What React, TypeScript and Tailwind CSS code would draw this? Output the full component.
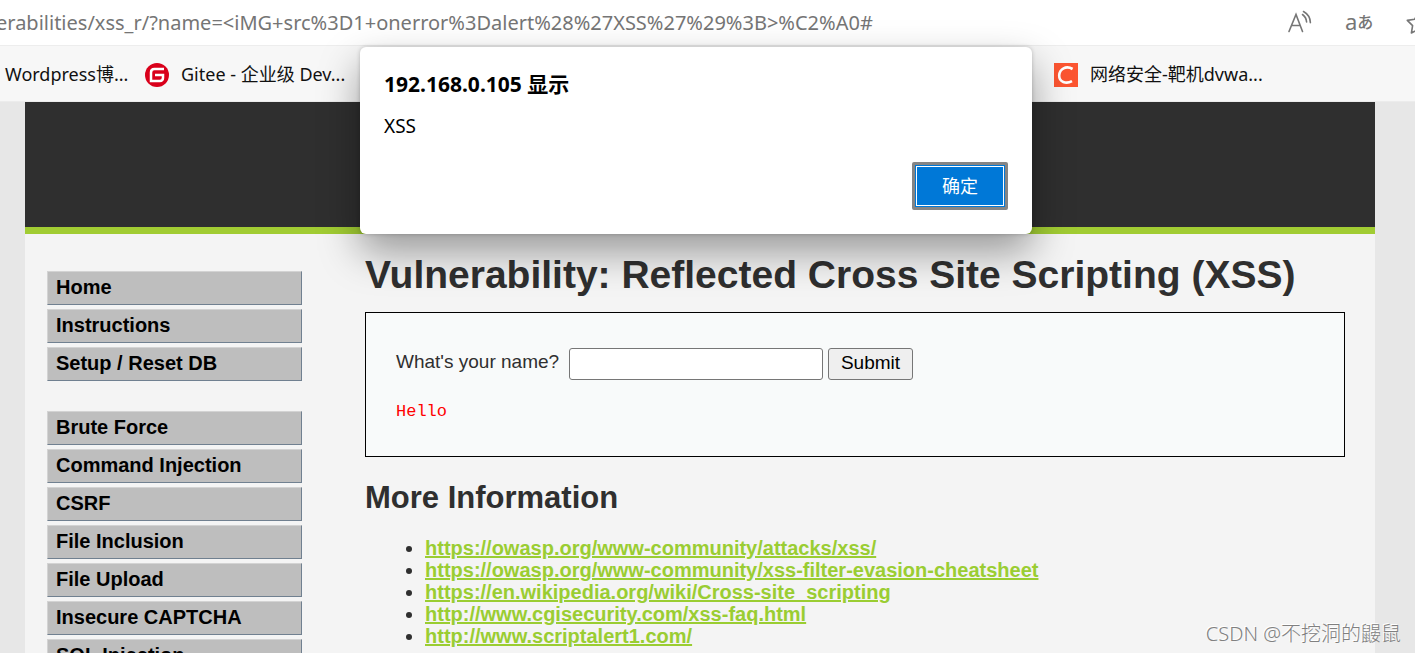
import React from "react";

const setupLinks = ["Home", "Instructions", "Setup / Reset DB"];
const vulnerabilityLinks = [
  "Brute Force",
  "Command Injection",
  "CSRF",
  "File Inclusion",
  "File Upload",
  "Insecure CAPTCHA",
  "SQL Injection",
];
const moreInfo = [
  "https://owasp.org/www-community/attacks/xss/",
  "https://owasp.org/www-community/xss-filter-evasion-cheatsheet",
  "https://en.wikipedia.org/wiki/Cross-site_scripting",
  "http://www.cgisecurity.com/xss-faq.html",
  "http://www.scriptalert1.com/",
];
const address =
  "erabilities/xss_r/?name=<iMG+src%3D1+onerror%3Dalert%28%27XSS%27%29%3B>%C2%A0#";

function ReadAloudIcon() {
  return (
    <svg width="26" height="26" viewBox="0 0 26 26" fill="none" stroke="#767676" strokeWidth="1.6" strokeLinecap="round">
      <path d="M2 21.5 L9 4.5 L15.5 21.5 M4.8 15.5 H13.2" />
      <path d="M15.5 4.5 C18 6.4 19.4 8.8 19.6 12" />
      <path d="M16.5 1.5 C20.6 3.8 23.2 7.6 23.4 12.6" />
    </svg>
  );
}

function StarIcon() {
  return (
    <svg width="26" height="26" viewBox="0 0 26 26" fill="none" stroke="#767676" strokeWidth="1.6" strokeLinejoin="round">
      <path d="M13 3 L9.7 9.2 L2.3 10.4 L7.6 15.6 L6.4 23 L13 19.6 L19.6 23 L18.4 15.6 L23.7 10.4 L16.3 9.2 Z" />
    </svg>
  );
}

function GiteeIcon() {
  return (
    <svg width="24" height="24" viewBox="0 0 24 24" className="shrink-0">
      <circle cx="12" cy="12" r="12" fill="#d9001b" />
      <path d="M19 6 H9.4 Q6 6 6 9.4 V18 H14.8 Q18 18 18 14.8 V12 H10" fill="none" stroke="#fff" strokeWidth="2.5" />
    </svg>
  );
}

function CsdnIcon() {
  return (
    <svg width="24" height="24" viewBox="0 0 24 24" className="shrink-0">
      <rect width="24" height="24" fill="#fc5531" />
      <path d="M18.6 6 C12 2.2 5.6 6 5.2 12.4 C5 19 12 21.4 18 18.2" fill="none" stroke="#fff" strokeWidth="2.6" />
    </svg>
  );
}

function Menu({ items }: { items: string[] }) {
  return (
    <ul className="flex flex-col gap-1">
      {items.map((item) => (
        <li key={item}>
          <a
            href="#"
            className="block h-[34px] border border-t-[#d3d3d3] border-l-[#d3d3d3] border-r-[#708090] border-b-[#708090] bg-[#bebebe] pl-2 text-[20px] leading-[31px] font-bold whitespace-nowrap text-black"
          >
            {item}
          </a>
        </li>
      ))}
    </ul>
  );
}

export default function App() {
  return (
    <div className="relative flex h-screen flex-col overflow-hidden bg-[#e7e7e7] font-['Noto_Sans','Noto_Sans_CJK_SC',sans-serif]">
      <div className="flex h-[45px] shrink-0 items-center bg-white">
        <input
          aria-label="Address"
          readOnly
          value={address}
          className="-ml-1 min-w-0 flex-1 bg-transparent text-[20px] leading-[28px] text-[#757575] outline-none"
        />
        <div className="-mr-4 flex shrink-0 items-center gap-8">
          <button aria-label="Read aloud"><ReadAloudIcon /></button>
          <button aria-label="Translate" className="flex w-[28px] items-center pb-1 text-[#767676]">
            <span className="text-[22px] leading-[24px]">a</span>
            <span className="font-['Noto_Sans_CJK_JP',sans-serif] text-[16px] leading-[24px] font-medium">あ</span>
          </button>
          <button aria-label="Favorite"><StarIcon /></button>
        </div>
      </div>

      <nav className="flex h-[57px] shrink-0 items-center border-t border-b border-t-[#ededed] border-b-[#ececec] bg-[#f7f7f7] pt-[2px] pl-[5px] text-[18px] whitespace-nowrap text-[#111]">
        <a href="#" className="w-[140px]">Wordpress博...</a>
        <a href="#" className="flex w-[909px] items-center gap-3">
          <GiteeIcon />
          Gitee - 企业级 Dev...
        </a>
        <a href="#" className="flex items-center gap-3">
          <CsdnIcon />
          网络安全-靶机dvwa...
        </a>
      </nav>

      <div className="flex-1 overflow-hidden pr-10 pl-[25px] font-['Liberation_Sans',sans-serif]">
        <header className="h-[132px] border-b-[7px] border-[#a1cc33] bg-[#2f2f2f]" />
        <div className="flex bg-[#f4f4f4] pr-[30px] pl-[22px] text-[#2f2f2f]">
          <nav className="flex w-[255px] shrink-0 flex-col gap-[30px] pt-[37px]">
            <Menu items={setupLinks} />
            <Menu items={vulnerabilityLinks} />
          </nav>
          <main className="ml-[63px] min-w-0 flex-1 pt-[19px]">
            <h1 className="text-[39px] leading-[44px] font-bold whitespace-nowrap">
              Vulnerability: Reflected Cross Site Scripting (XSS)
            </h1>
            <section className="mt-[15px] h-[145px] border border-black bg-[#f8fafa] px-[30px] pt-[35px]">
              <form className="flex h-8 items-center text-[19px]" onSubmit={(e) => e.preventDefault()}>
                <label htmlFor="name" className="w-[173px] pb-1 whitespace-nowrap">What's your name?</label>
                <input
                  id="name"
                  type="text"
                  className="h-8 w-[254px] rounded-[3px] border border-[#767676] bg-white px-1"
                />
                <button
                  type="submit"
                  className="ml-[5px] h-8 w-[85px] rounded-[3px] border border-[#767676] bg-[#efefef] pb-[2px] text-black"
                >
                  Submit
                </button>
              </form>
              <pre className="mt-[21px] font-['Liberation_Mono',monospace] text-[17px] leading-[22px] text-[#ff0000]">Hello</pre>
            </section>
            <h2 className="mt-[23px] text-[31px] leading-[36px] font-bold">More Information</h2>
            <ul className="mt-[21px] list-disc pl-[60px] text-[20px] leading-[22px]">
              {moreInfo.map((url) => (
                <li key={url}>
                  <a href={url} className="font-bold text-[#9acd32] underline">{url}</a>
                </li>
              ))}
            </ul>
          </main>
        </div>
      </div>

      <div
        role="alertdialog"
        aria-labelledby="alert-title"
        className="absolute top-[47px] left-[360px] flex h-[187px] w-[672px] flex-col rounded-[6px] bg-white px-6 pt-[23px] pb-6 text-black shadow-[0_18px_40px_rgba(0,0,0,0.38),0_0_4px_rgba(0,0,0,0.2)]"
      >
        <h2 id="alert-title" className="text-[21px] leading-[28px] font-bold">192.168.0.105 显示</h2>
        <p className="mt-4 text-[19px] leading-[24px]">XSS</p>
        <button className="mt-auto h-[48px] w-[96px] self-end rounded-[2px] border-[3px] border-[#858585] bg-[#0078d7] p-px text-[18px] text-white">
          <span className="flex h-full items-center justify-center border border-white">确定</span>
        </button>
      </div>

      <div className="absolute right-[14px] bottom-[5px] text-[20px] leading-[28px] font-light whitespace-nowrap text-[#808080] [text-shadow:-1px_-1px_0_#ffffff]">
        CSDN @不挖洞的鼹鼠
      </div>
    </div>
  );
}
